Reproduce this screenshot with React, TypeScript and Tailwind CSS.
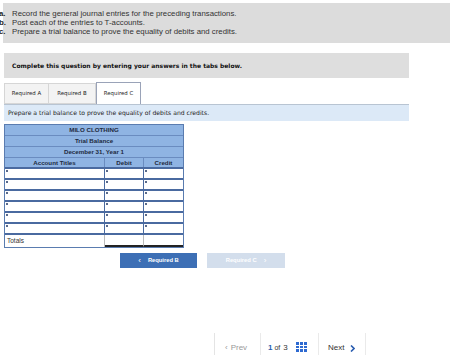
import React from "react";

const rows = [0, 1, 2, 3, 4, 5];

function Cell({ w }: { w: string }) {
  return (
    <div className={`${w} h-full border-r border-[#4a6aa0] relative bg-white`}>
      <span className="absolute left-[1px] top-[1px] w-[2px] h-[2px] bg-[#5a6a8a]" />
    </div>
  );
}

export default function App() {
  return (
    <div className="w-[474px] h-[355px] bg-white relative overflow-hidden" style={{ fontFamily: "'Liberation Sans', Arial, sans-serif" }}>
      {/* instructions */}
      <div className="ml-[3px] mt-[3px] w-[447px] h-[40px] bg-[#dcdcdc] pt-[6px] text-[7.8px] leading-[9px] text-[#333]">
        {[
          ["a.", "Record the general journal entries for the preceding transactions."],
          ["b.", "Post each of the entries to T-accounts."],
          ["c.", "Prepare a trial balance to prove the equality of debits and credits."],
        ].map(([k, t]) => (
          <div key={k} className="flex">
            <span className="w-[9px] -ml-[4px] font-bold text-[#222]">{k}</span>
            <span className="ml-[4px]">{t}</span>
          </div>
        ))}
      </div>

      {/* question banner */}
      <div className="ml-[4px] mt-[10px] w-[405px] h-[25px] bg-[#dedede] flex items-center pl-[8px] text-[6px] font-bold text-[#111]" style={{ fontFamily: "'DejaVu Sans', Verdana, sans-serif" }}>
        Complete this question by entering your answers in the tabs below.
      </div>

      {/* tabs */}
      <div className="ml-[4px] mt-[4px] w-[405px] flex items-end h-[22px]" style={{ fontFamily: "'DejaVu Sans', Verdana, sans-serif" }}>
        <div className="w-[45px] h-[21px] bg-[#f3f3f3] border border-[#d6d6d6] flex items-center justify-center text-[5.4px] text-[#222]">Required A</div>
        <div className="w-[47px] h-[21px] bg-[#f3f3f3] border border-l-0 border-[#d6d6d6] flex items-center justify-center text-[5.4px] text-[#222]">Required B</div>
        <div className="w-[45px] h-[22px] bg-white border border-b-0 border-[#9aa3b8] flex items-center justify-center text-[5.4px] text-[#222]">Required C</div>
      </div>
      <div className="ml-[4px] w-[405px] h-[17px] bg-[#dce9f7] border-t border-[#b8c4d2] flex items-center pl-[4px] text-[6.1px] text-[#222]" style={{ fontFamily: "'DejaVu Sans', Verdana, sans-serif" }}>
        Prepare a trial balance to prove the equality of debits and credits.
      </div>

      {/* trial balance table */}
      <div className="ml-[4px] mt-[3px] w-[180px] border border-[#5a7cb0] text-[6.2px] font-bold text-[#1e2a40]">
        {["MILO CLOTHING", "Trial Balance", "December 31, Year 1"].map((t) => (
          <div key={t} className="h-[11px] bg-[#8fb4e3] border-b border-[#6a8cc0] flex items-center justify-center">{t}</div>
        ))}
        <div className="h-[11px] bg-[#8fb4e3] flex border-b-2 border-[#4a6aa0]">
          <div className="w-[100px] flex items-center justify-center border-r border-[#6a8cc0]">Account Titles</div>
          <div className="w-[39px] flex items-center justify-center border-r border-[#6a8cc0]">Debit</div>
          <div className="flex-1 flex items-center justify-center">Credit</div>
        </div>
        {rows.map((r) => (
          <div key={r} className="h-[11px] flex border-b-2 border-[#4a6aa0] last:border-b">
            <Cell w="w-[100px]" />
            <Cell w="w-[39px]" />
            <div className="flex-1 h-full relative bg-white">
              <span className="absolute left-[1px] top-[1px] w-[2px] h-[2px] bg-[#5a6a8a]" />
            </div>
          </div>
        ))}
        <div className="h-[12px] flex font-normal text-[#333] bg-white">
          <div className="w-[100px] border-r border-[#bbb] flex items-center pl-[2px] text-[6.5px]">Totals</div>
          <div className="w-[39px] border-r border-[#bbb] border-b-2 border-b-[#222]" />
          <div className="flex-1 border-b-2 border-[#222]" />
        </div>
      </div>

      {/* nav buttons */}
      <div className="mt-[5px] ml-[120px] flex gap-[10px]">
        <div className="w-[77px] h-[15px] bg-[#3d6fb5] flex items-center justify-center gap-[7px] text-white text-[5.8px] font-bold">
          <span className="text-[8px] font-normal leading-none">‹</span>
          <span>Required B</span>
        </div>
        <div className="w-[78px] h-[15px] bg-[#d3deec] flex items-center justify-center gap-[7px] text-white text-[5.8px] font-bold">
          <span>Required C</span>
          <span className="text-[8px] font-normal leading-none">›</span>
        </div>
      </div>

      {/* pager */}
      <div className="absolute left-0 right-0 bottom-0 h-[22px] flex text-[8px] text-[#333]">
        <div className="ml-[214px] h-full border-l border-[#e4e4e4] w-[46px] flex items-center pt-[8px] pl-[10px] text-[#999]">
          <span className="mr-[3px]">‹</span>Prev
        </div>
        <div className="h-full border-l border-[#eaeaea] w-[58px] flex items-center pt-[8px] pl-[7px]">
          <span className="text-[#2a5db0] font-bold">1</span>
          <span className="ml-[2px] text-[7px]">of</span>
          <span className="ml-[3px]">3</span>
          <span className="ml-[8px] -mt-[2px] grid grid-cols-3 gap-[1px] w-[11px] h-[10px]">
            {Array.from({ length: 9 }).map((_, i) => (
              <span key={i} className="bg-[#2e6ad1]" />
            ))}
          </span>
        </div>
        <div className="h-full border-l border-[#eaeaea] w-[48px] flex items-center pt-[8px] pl-[9px] border-r">
          Next
          <svg width="5" height="7" viewBox="0 0 5 7" className="ml-[6px]">
            <path d="M1 0.5 L4 3.5 L1 6.5" stroke="#2a5db0" strokeWidth="1.6" fill="none" />
          </svg>
        </div>
      </div>
    </div>
  );
}
